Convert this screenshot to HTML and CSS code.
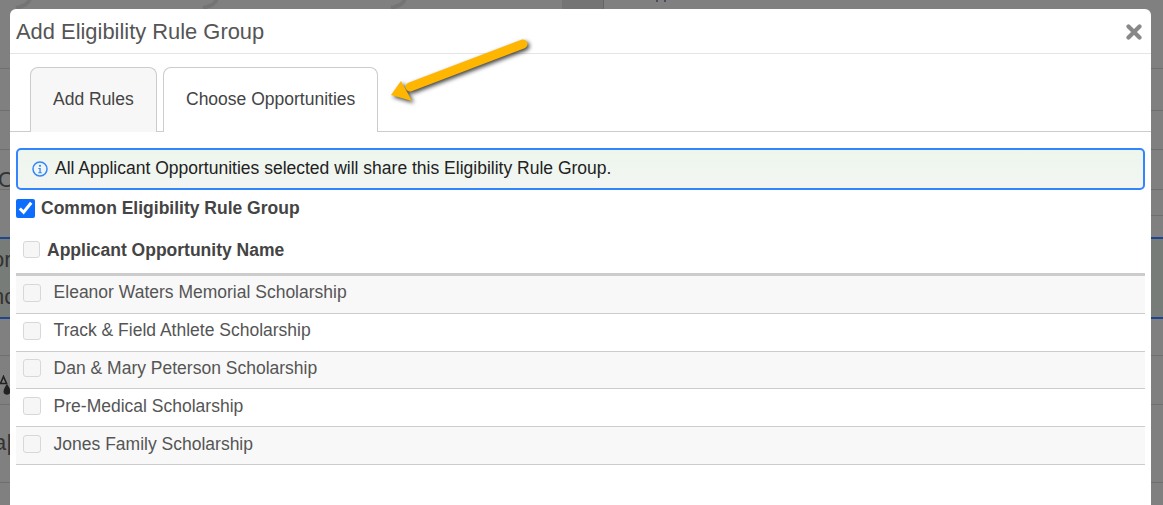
FILE: index.html
```html
<!DOCTYPE html>
<html lang="en">
<head>
<meta charset="utf-8">
<title>Add Eligibility Rule Group</title>
<link rel="stylesheet" href="styles.css">
</head>
<body>
<div class="page">
  <div class="bg-row h68">
    <svg class="swoosh s1" viewBox="0 0 20 10" aria-hidden="true"><path d="M17 -3C17 4 10 6 3 8" fill="none" stroke="#747474" stroke-width="4"/></svg>
    <svg class="swoosh s2" viewBox="0 0 20 10" aria-hidden="true"><path d="M17 -3C17 4 10 6 3 8" fill="none" stroke="#747474" stroke-width="4"/></svg>
    <svg class="swoosh s3" viewBox="0 0 20 10" aria-hidden="true"><path d="M17 -3C17 4 10 6 3 8" fill="none" stroke="#747474" stroke-width="4"/></svg>
    <span class="top-cell"></span>
    <span class="dot d1"></span><span class="dot d2"></span>
  </div>
  <div class="bg-row h42"></div>
  <div class="bg-row h39"></div>
  <div class="bg-row h40"><span class="frag">O</span></div>
  <div class="bg-row h49 blue"><span class="side-line"></span></div>
  <div class="bg-row h80 blue"><span class="frag frag-or">or</span><span class="frag frag-nc">nc</span></div>
  <div class="bg-row h37"></div>
  <div class="bg-row h49">
    <svg class="frag-icon" viewBox="0 0 10 22" aria-hidden="true">
      <path d="M3.5 1.5 6.5 8.5H.5Z" fill="none" stroke="#222" stroke-width="1.6"/>
      <path d="M7 9C9 12 10.5 14 10.5 17A3.6 3.6 0 0 1 3.5 17C3.5 14 5 12 7 9Z" fill="#222"/>
    </svg>
  </div>
  <div class="bg-row h78"><span class="frag frag-a">a|</span></div>
</div>

<div class="modal">
  <header class="modal-head">
    <h1 class="modal-title">Add Eligibility Rule Group</h1>
    <svg class="close" viewBox="0 0 16 16" aria-label="Close">
      <path d="M2.5 2.5 13.5 13.5M13.5 2.5 2.5 13.5" fill="none" stroke="#888" stroke-width="4.2" stroke-linecap="round"/>
    </svg>
  </header>
  <nav class="tabs">
    <a class="tab">Add Rules</a>
    <a class="tab active">Choose Opportunities</a>
  </nav>
  <svg class="arrow" viewBox="0 0 150 70" aria-hidden="true">
    <path d="M133 5 20 48" fill="none" stroke="#ffb600" stroke-width="9" stroke-linecap="round"/>
    <path d="M1 56 11 42 22 62Z" fill="#ffb600"/>
  </svg>
  <section class="body">
    <div class="alert">
      <svg class="info" viewBox="0 0 16 16" aria-hidden="true">
        <circle cx="8" cy="8" r="7" fill="none" stroke="#3385ff" stroke-width="1.5"/>
        <circle cx="8" cy="4.8" r="1.1" fill="#3385ff"/>
        <path d="M6.4 7h2.3v4.2h1.1v1H6.3v-1h1.1V8H6.4Z" fill="#3385ff"/>
      </svg>
      <span class="alert-text">All Applicant Opportunities selected will share this Eligibility Rule Group.</span>
    </div>
    <label class="common"><input class="check-on" type="checkbox" checked>Common Eligibility Rule Group</label>
    <div class="table-head"><input class="check" type="checkbox"><span>Applicant Opportunity Name</span></div>
    <ul class="rows">
      <li class="row"><input class="check" type="checkbox"><span>Eleanor Waters Memorial Scholarship</span></li>
      <li class="row"><input class="check" type="checkbox"><span>Track &amp; Field Athlete Scholarship</span></li>
      <li class="row"><input class="check" type="checkbox"><span>Dan &amp; Mary Peterson Scholarship</span></li>
      <li class="row"><input class="check" type="checkbox"><span>Pre-Medical Scholarship</span></li>
      <li class="row"><input class="check" type="checkbox"><span>Jones Family Scholarship</span></li>
    </ul>
  </section>
</div>
</body>
</html>
```

FILE: styles.css
```css
* { box-sizing: border-box; }
html, body { margin: 0; height: 100%; overflow: hidden; }
body { background: #808080; font-family: "Liberation Sans", Arial, sans-serif; font-size: 17.5px; color: #444; }

.page { height: 505px; overflow: hidden; }
.bg-row { position: relative; border-bottom: 1px solid #6f6f6f; overflow: hidden; color: #333; }
.bg-row.blue { border-bottom: 2px solid #1d4690; }
.h68 { height: 69px; }
.h42 { height: 42px; }
.h39 { height: 39px; }
.h40 { height: 40px; }
.h49 { height: 49px; }
.h80 { height: 80px; background: #787c78; }
.h37 { height: 37px; }
.h78 { height: 78px; }
.swoosh { position: absolute; top: 0; width: 20px; height: 10px; }
.s1 { left: 13px; }
.s2 { left: 200px; }
.s3 { left: 388px; }
.top-cell { position: absolute; left: 562px; top: 0; width: 42px; height: 9px; background: #747474; border-right: 1px solid #666; }
.dot { position: absolute; top: 0; width: 2px; height: 2px; background: #4c4c5c; }
.d1 { left: 656px; }
.d2 { left: 664px; }
.side-line { position: absolute; left: 1151px; right: 0; top: 25px; height: 1px; background: #6f6f6f; }
.frag { position: absolute; left: -2px; top: 18px; font-size: 22px; line-height: 24px; }
.frag-or { left: -8px; top: 9px; }
.frag-nc { left: -8px; top: 46px; }
.frag-a { left: -6px; top: 26px; }
.frag-icon { position: absolute; left: 0; top: 19px; width: 10px; height: 22px; }

.modal { position: fixed; left: 10px; top: 9px; width: 1141px; height: 520px; background: #fff; border-radius: 6px 6px 0 0; }
.modal-head { height: 45px; padding: 1px 9px 0 6px; display: flex; align-items: center; justify-content: space-between; border-bottom: 1px solid #e5e5e5; }
.modal-title { margin: 0; font-size: 21.9px; font-weight: 400; line-height: 43px; color: #555; }
.close { width: 16px; height: 16px; }

.tabs { height: 78px; padding: 13px 0 0 20px; display: flex; gap: 6px; border-bottom: 1px solid #ccc; }
.tab { height: 65px; padding: 21px 22px 0; line-height: 20px; white-space: nowrap; color: #444; background: #fff; border: 1px solid #ccc; border-bottom: 0; border-radius: 8px 8px 0 0; }
.tab:first-child { background: #f7f7f7; width: 127px; }
.tab.active { width: 215px; }

.arrow { position: absolute; left: 380px; top: 30px; width: 150px; height: 70px; overflow: visible; filter: drop-shadow(2px 2px 2px rgba(0,0,0,.75)); }

.body { padding: 16px 6px 0; }
.alert { height: 42px; display: flex; align-items: center; gap: 7px; padding-left: 14px; color: #222; border: 2px solid #3385ff; border-radius: 5px; background: linear-gradient(#edf6ed, #f3f5f2); }
.alert-text { margin-top: -1px; }
.info { width: 16px; height: 16px; flex: none; }

.common { display: flex; align-items: center; gap: 6px; height: 19px; margin-top: 9px; font-weight: 700; color: #444; }
.check-on { width: 19px; height: 19px; margin: 0; accent-color: #0d6efd; }
.check { appearance: none; width: 18px; height: 18px; margin: 0 0 0 7px; flex: none; background: #f6f6f6; border: 1px solid #d8d8d8; border-radius: 3px; }

.table-head { display: flex; align-items: center; gap: 7px; height: 46px; margin-top: 9px; font-weight: 700; color: #444; }
.table-head .check { width: 17px; height: 17px; margin-bottom: 2px; }
.rows { list-style: none; margin: 0; padding: 0; border-top: 3px solid #ccc; }
.row { display: flex; align-items: center; gap: 12.6px; height: 37.8px; padding-bottom: 3px; color: #555; border-bottom: 1px solid #ccc; }
.row:nth-child(odd) { background: #f8f8f8; }
```
